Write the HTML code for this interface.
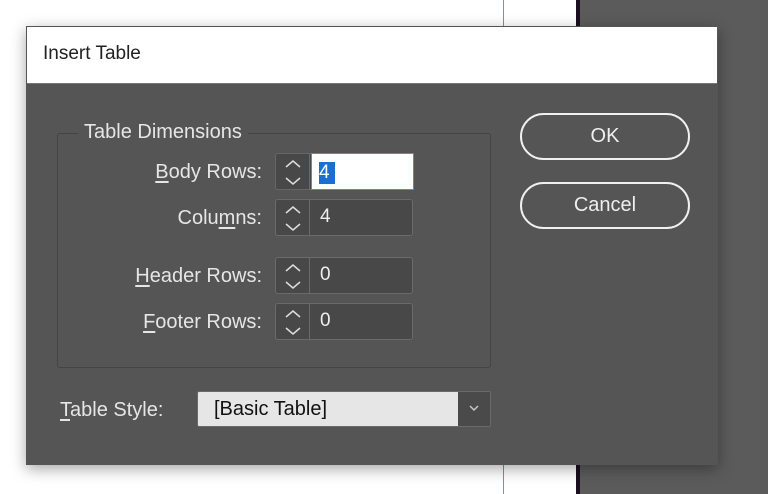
<!DOCTYPE html>
<html><head><style>
*{margin:0;padding:0;box-sizing:border-box}
body{width:768px;height:494px;background:#fff;position:relative;overflow:hidden;font-family:"Liberation Sans",sans-serif;}
.abs{position:absolute}
.t{color:#e6e6e6;font-size:20px;position:absolute;white-space:nowrap}
.lab{text-align:right;width:200px;left:62px}
.sp{position:absolute;left:275px;width:138px;height:37px;border:1px solid #6a6a6a;border-radius:3px;background:#484848}
.sp .b{position:absolute;left:0;top:0;width:34px;height:100%;border-right:1px solid #6a6a6a}
.sp .v{position:absolute;left:44px;top:6px;color:#eee;font-size:19px}
.btn{position:absolute;left:520px;width:170px;height:47px;border:2px solid #f0f0f0;border-radius:24px;color:#eee;font-size:20px;text-align:center;line-height:43px}
u{text-decoration:underline;text-underline-offset:3px}
</style></head><body>
<div class="abs" style="left:503px;top:0;width:1px;height:494px;background:#5b9bd5"></div>
<div class="abs" style="left:576px;top:0;width:4px;height:494px;background:#1a1020"></div>
<div class="abs" style="left:580px;top:0;width:188px;height:494px;background:#5b5b5b"></div>
<div class="abs" style="left:26px;top:26px;width:692px;height:439px;background:#555;box-shadow:0 4px 14px rgba(0,0,0,.35)"></div>
<div class="abs" style="left:27px;top:27px;width:690px;height:57px;background:#fff;border-bottom:1px solid #777"></div>
<div class="abs" style="left:43px;top:43px;font-size:19px;color:#222">Insert Table</div>
<div class="abs" style="left:57px;top:133px;width:434px;height:235px;border:1px solid #444;border-radius:3px"></div>
<div class="t" style="left:78px;top:121px;background:#555;padding:0 6px">Table Dimensions</div>
<div class="t lab" style="top:161px"><u>B</u>ody Rows:</div>
<div class="t lab" style="top:207px">Colu<u>m</u>ns:</div>
<div class="t lab" style="top:265px"><u>H</u>eader Rows:</div>
<div class="t lab" style="top:311px"><u>F</u>ooter Rows:</div>
<svg width="0" height="0" style="position:absolute"><defs><g id="ar"><path d="M10 13 L17 7 L24 13 M10 24 L17 30 L24 24" stroke="#ddd" stroke-width="1.5" fill="none"/></g></defs></svg>
<div class="sp" style="top:153px;border-color:#666"><div class="b"><svg width="34" height="37"><use href="#ar"/></svg></div>
<div class="abs" style="left:35px;top:-1px;width:103px;height:37px;background:#fff;border:1px solid #4a90d9"></div>
<div class="abs" style="left:43px;top:8px;width:16px;height:22px;background:#1a6fd0;color:#fff;font-size:19px;line-height:22px">4</div></div>
<div class="sp" style="top:199px"><div class="b"><svg width="34" height="37"><use href="#ar"/></svg></div><div class="v">4</div></div>
<div class="sp" style="top:257px"><div class="b"><svg width="34" height="37"><use href="#ar"/></svg></div><div class="v">0</div></div>
<div class="sp" style="top:303px"><div class="b"><svg width="34" height="37"><use href="#ar"/></svg></div><div class="v">0</div></div>
<div class="btn" style="top:113px">OK</div>
<div class="btn" style="top:182px">Cancel</div>
<div class="t" style="left:60px;top:399px"><u>T</u>able Style:</div>
<div class="abs" style="left:197px;top:391px;width:294px;height:36px;border:1px solid #6a6a6a;border-radius:2px;background:#e6e6e6"></div>
<div class="abs" style="left:458px;top:392px;width:32px;height:34px;background:#4a4a4a"></div>
<svg class="abs" style="left:468px;top:402px" width="12" height="12"><path d="M2 4 L6 8 L10 4" stroke="#ccc" stroke-width="1.4" fill="none"/></svg>
<div class="abs" style="left:214px;top:398px;font-size:20px;color:#111">[Basic Table]</div>
</body></html>
